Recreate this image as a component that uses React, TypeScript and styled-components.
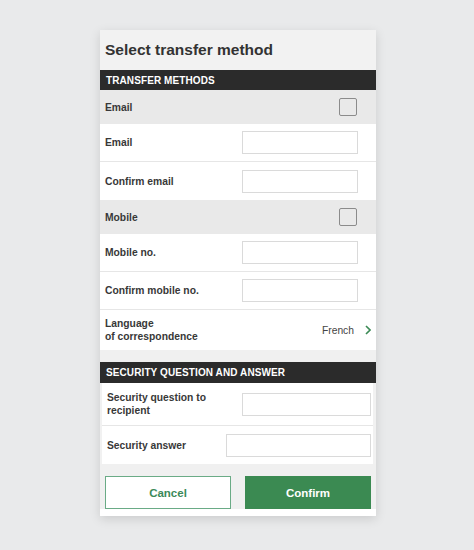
import React from "react";
import styled, { createGlobalStyle } from "styled-components";

const Global = createGlobalStyle`
  * { box-sizing: border-box; }
  html, body { margin: 0; padding: 0; background: #e9eaeb; }
  body { font-family: "Liberation Sans", Arial, sans-serif; color: #333; }
`;

const Page = styled.div`
  min-height: 550px;
  padding: 30px 0 0 100px;
`;

const Card = styled.div`
  width: 276px;
  background: #fff;
  box-shadow: 0 3px 10px rgba(0, 0, 0, 0.13);
  padding-bottom: 7px;
`;

const Title = styled.h1`
  margin: 0;
  height: 40px;
  display: flex;
  align-items: center;
  padding-left: 5px;
  background: #f2f2f2;
  font-size: 15.5px;
  font-weight: 700;
  color: #333;
`;

const SectionBar = styled.div<{ $h: number }>`
  height: ${(p) => p.$h}px;
  display: flex;
  align-items: center;
  padding-left: 6px;
  background: #2b2b2b;
  color: #fff;
  font-size: 10px;
  font-weight: 700;
  letter-spacing: 0.1px;
`;

const ToggleRow = styled.div`
  height: 34px;
  display: flex;
  align-items: center;
  justify-content: space-between;
  padding: 0 19px 0 5px;
  background: #e9e9e9;
`;

const Checkbox = styled.span`
  width: 18px;
  height: 18px;
  border: 1.5px solid #8b8b8b;
  border-radius: 2px;
  background: transparent;
`;

const Row = styled.div<{ $h: number; $pr: number; $last?: boolean }>`
  height: ${(p) => p.$h}px;
  display: flex;
  align-items: center;
  justify-content: space-between;
  padding: 0 ${(p) => p.$pr}px 0 5px;
  background: #fff;
  border-bottom: ${(p) => (p.$last ? "none" : "1px solid #e6e6e6")};
`;

const Label = styled.span`
  font-size: 10.3px;
  font-weight: 700;
  line-height: 13px;
  color: #383838;
`;

const Input = styled.input<{ $w: number }>`
  width: ${(p) => p.$w}px;
  height: 23px;
  border: 1px solid #dadada;
  border-radius: 0;
  background: #fff;
  padding: 0 4px;
  font: inherit;
  outline: none;
`;

const Value = styled.span`
  display: flex;
  align-items: center;
  gap: 11px;
  font-size: 10.3px;
  color: #444;
`;

const Spacer = styled.div<{ $h: number }>`
  height: ${(p) => p.$h}px;
  background: #f0f0f0;
`;

const Inset = styled.div`
  background: #f1f1f1;
  padding: 0 3px 0 2px;
`;

const Actions = styled.div`
  display: grid;
  grid-template-columns: 126px 126px;
  justify-content: space-between;
  padding: 12px 5px 0 5px;
  background: #f0f0f0;
`;

const Button = styled.button<{ $primary?: boolean }>`
  height: 33px;
  font-family: inherit;
  font-size: 11.5px;
  font-weight: 700;
  cursor: pointer;
  border: 1.5px solid ${(p) => (p.$primary ? "#3b8a52" : "#6aab86")};
  background: ${(p) => (p.$primary ? "#3b8a52" : "#fff")};
  color: ${(p) => (p.$primary ? "#fff" : "#3b8a5a")};
`;

const Chevron = () => (
  <svg width="6" height="10" viewBox="0 0 6 10">
    <polyline points="1,1 5,5 1,9" fill="none" stroke="#3b8a55" strokeWidth="1.6" />
  </svg>
);

export default function App() {
  return (
    <>
      <Global />
      <Page>
        <Card>
          <Title>Select transfer method</Title>
          <SectionBar $h={20}>TRANSFER METHODS</SectionBar>
          <ToggleRow>
            <Label>Email</Label>
            <Checkbox />
          </ToggleRow>
          <Row $h={38} $pr={18}>
            <Label>Email</Label>
            <Input $w={116} />
          </Row>
          <Row $h={38} $pr={18} $last>
            <Label>Confirm email</Label>
            <Input $w={116} />
          </Row>
          <ToggleRow>
            <Label>Mobile</Label>
            <Checkbox />
          </ToggleRow>
          <Row $h={38} $pr={18}>
            <Label>Mobile no.</Label>
            <Input $w={116} />
          </Row>
          <Row $h={38} $pr={18}>
            <Label>Confirm mobile no.</Label>
            <Input $w={116} />
          </Row>
          <Row $h={40} $pr={5} $last>
            <Label>
              Language
              <br />
              of correspondence
            </Label>
            <Value>
              French
              <Chevron />
            </Value>
          </Row>
          <Spacer $h={12} />
          <SectionBar $h={21}>SECURITY QUESTION AND ANSWER</SectionBar>
          <Inset>
            <Row $h={43} $pr={2}>
              <Label>
                Security question to
                <br />
                recipient
              </Label>
              <Input $w={129} />
            </Row>
            <Row $h={38} $pr={2} $last>
              <Label>Security answer</Label>
              <Input $w={145} />
            </Row>
          </Inset>
          <Actions>
            <Button>Cancel</Button>
            <Button $primary>Confirm</Button>
          </Actions>
        </Card>
      </Page>
    </>
  );
}
